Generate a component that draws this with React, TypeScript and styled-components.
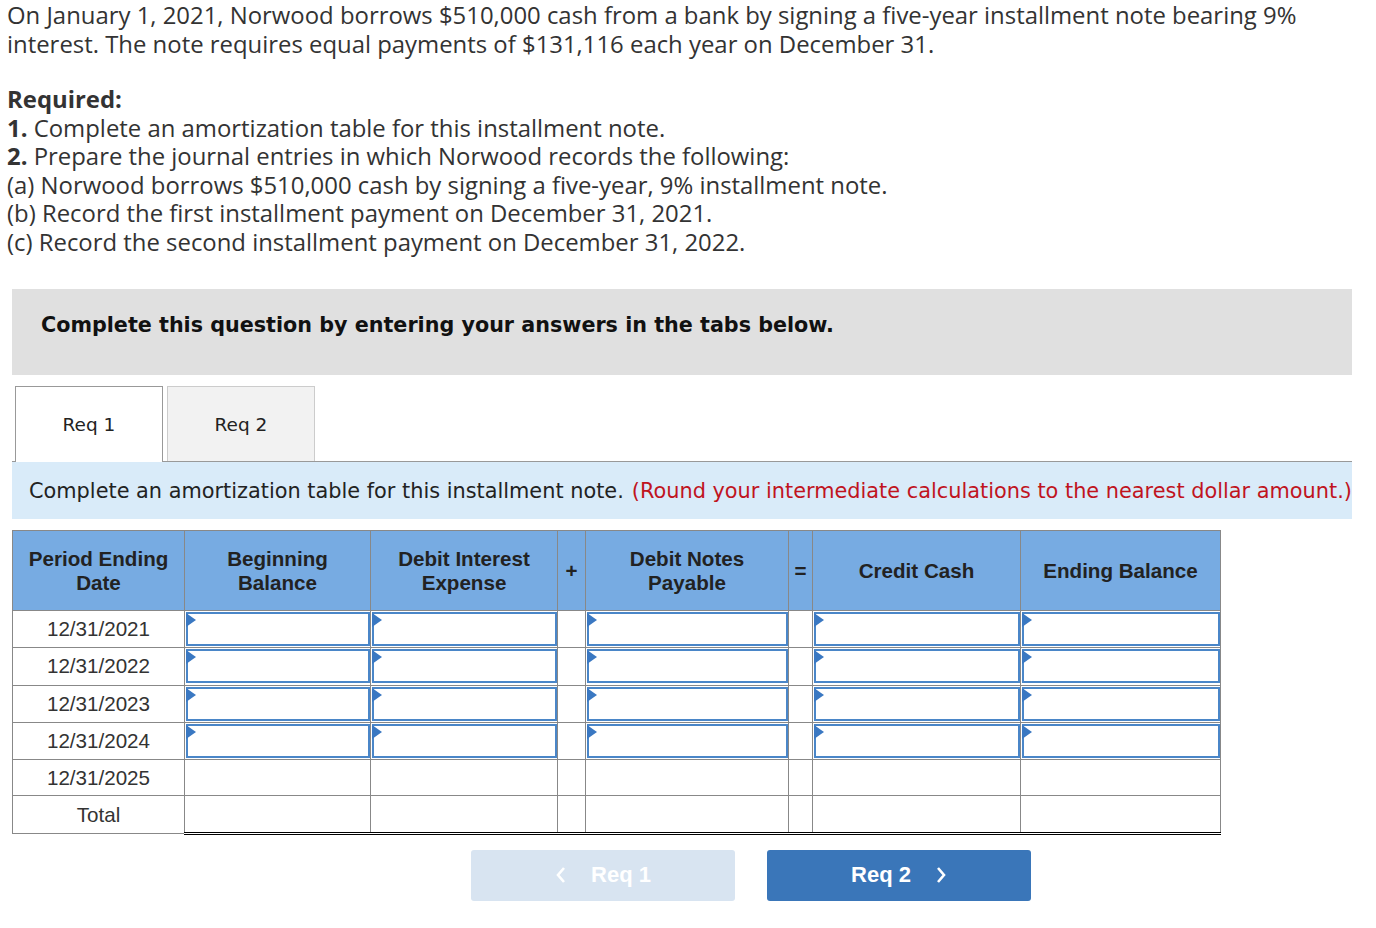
import React from 'react';
import styled, { createGlobalStyle } from 'styled-components';

const GlobalStyle = createGlobalStyle`
    body {
        margin: 0;
        background: #fff;
        color: #222;
    }
`;

const Page = styled.div`
    padding: 1px 0 40px 7px;
    width: 1376px;
    box-sizing: border-box;
`;

const Problem = styled.div`
    font-family: 'Open Sans', Lato, sans-serif;
    font-size: 23.9px;
    line-height: 28.5px;
    color: #333;
    white-space: nowrap;

    b {
        font-weight: 700;
    }
`;

const Para = styled.p`
    margin: 0;
`;

const Gap = styled.div`
    height: 27px;
`;

const Section = styled.div`
    margin: 33px 0 0 5px;
    width: 1340px;
`;

const Banner = styled.div`
    background: #e0e0e0;
    padding: 24px 29px 38px;
    font-family: 'DejaVu Sans', Verdana, sans-serif;
    font-weight: bold;
    font-size: 20.7px;
    line-height: 24px;
    color: #111;
`;

const Tabs = styled.div`
    display: flex;
    gap: 4px;
    padding-left: 3px;
    margin-top: 11px;
    border-bottom: 1px solid #999;
`;

const Tab = styled.div<{ $active?: boolean }>`
    width: 148px;
    box-sizing: border-box;
    display: flex;
    align-items: center;
    justify-content: center;
    font-family: 'DejaVu Sans', Verdana, sans-serif;
    font-size: 18.5px;
    color: #222;
    background: ${p => (p.$active ? '#fff' : '#f2f2f2')};
    border: 1px solid ${p => (p.$active ? '#999' : '#ccc')};
    border-bottom: none;
    margin-bottom: ${p => (p.$active ? '-1px' : '0')};
    height: ${p => (p.$active ? '76px' : '75px')};
`;

const Instruction = styled.div`
    background: #d9ebf9;
    height: 57px;
    display: flex;
    align-items: center;
    padding-left: 17px;
    font-family: 'DejaVu Sans', Verdana, sans-serif;
    font-size: 20.85px;
    color: #222;
    white-space: nowrap;
    overflow: hidden;
`;

const Note = styled.span`
    color: #c0141e;
    margin-left: 8px;
`;

const Table = styled.table`
    margin-top: 11px;
    border-collapse: collapse;
    font-family: 'Liberation Sans', Arial, sans-serif;
    table-layout: fixed;
`;

const Th = styled.th<{ $w: number }>`
    width: ${p => p.$w}px;
    height: 79px;
    background: #77abe2;
    border: 1px solid #888;
    font-size: 20.6px;
    line-height: 24px;
    font-weight: bold;
    color: #222;
    padding: 0;
    text-align: center;
`;

const Td = styled.td<{ $top?: boolean; $bottom?: boolean }>`
    height: 35.3px;
    border-left: 1px solid #888;
    border-right: 1px solid #888;
    border-top: 1px solid ${p => (p.$top ? '#000' : '#888')};
    border-bottom: ${p => (p.$bottom ? '3px double #000' : '1px solid #888')};
    padding: 0;
    font-size: 20.6px;
    line-height: 22px;
    color: #333;
    text-align: center;
    vertical-align: middle;
`;

const DateTd = styled(Td)`
    border-bottom: 1px solid #888;
    border-top: 1px solid #888;
`;

const InputCell = styled(Td)`
    padding: 1px 0 0 1px;
    vertical-align: top;
`;

const InputBox = styled.div`
    position: relative;
    height: 34px;
    border: 2px solid #4a86c8;
    background: #fff;
    box-sizing: border-box;
`;

const Flag = styled.span`
    position: absolute;
    left: -2px;
    top: -1px;
    width: 0;
    height: 0;
    border-top: 7px solid transparent;
    border-bottom: 7px solid transparent;
    border-left: 10px solid #3a78c2;
`;

const Buttons = styled.div`
    display: flex;
    gap: 32px;
    margin: 15px 0 0 459px;
`;

const NavButton = styled.div<{ $disabled?: boolean }>`
    width: 264px;
    height: 51px;
    border-radius: 3px;
    background: ${p => (p.$disabled ? '#d8e4f1' : '#3a76b9')};
    color: #fff;
    display: flex;
    align-items: center;
    justify-content: center;
    gap: 24px;
    font-family: 'Liberation Sans', Arial, sans-serif;
    font-weight: bold;
    font-size: 22px;
`;

const Chevron = ({ dir }: { dir: 'left' | 'right' }) => (
    <svg width="12" height="18" viewBox="0 0 12 18">
        <path
            d={dir === 'left' ? 'M9 2 L3 9 L9 16' : 'M3 2 L9 9 L3 16'}
            fill="none"
            stroke="#fff"
            strokeWidth="2.6"
        />
    </svg>
);

const cols = [
    { w: 171, label: <>Period Ending<br />Date</> },
    { w: 185, label: <>Beginning<br />Balance</> },
    { w: 186, label: <>Debit Interest<br />Expense</> },
    { w: 27, label: '+' },
    { w: 202, label: <>Debit Notes<br />Payable</> },
    { w: 23, label: '=' },
    { w: 207, label: 'Credit Cash' },
    { w: 199, label: 'Ending Balance' },
];

const dates = ['12/31/2021', '12/31/2022', '12/31/2023', '12/31/2024', '12/31/2025', 'Total'];

const App = () => {
    return (
        <Page>
            <GlobalStyle />
            <Problem>
                <Para>
                    On January 1, 2021, Norwood borrows $510,000 cash from a bank by signing a five-year installment note bearing 9%
                    <br />
                    interest. The note requires equal payments of $131,116 each year on December 31.
                </Para>
                <Gap />
                <Para><b>Required:</b></Para>
                <Para><b>1.</b> Complete an amortization table for this installment note.</Para>
                <Para><b>2.</b> Prepare the journal entries in which Norwood records the following:</Para>
                <Para>(a) Norwood borrows $510,000 cash by signing a five-year, 9% installment note.</Para>
                <Para>(b) Record the first installment payment on December 31, 2021.</Para>
                <Para>(c) Record the second installment payment on December 31, 2022.</Para>
            </Problem>
            <Section>
                <Banner>Complete this question by entering your answers in the tabs below.</Banner>
                <Tabs>
                    <Tab $active>Req 1</Tab>
                    <Tab>Req 2</Tab>
                </Tabs>
                <Instruction>
                    Complete an amortization table for this installment note.
                    <Note>(Round your intermediate calculations to the nearest dollar amount.)</Note>
                </Instruction>
                <Table>
                    <thead>
                        <tr>
                            {cols.map((c, i) => (
                                <Th key={i} $w={c.w}>{c.label}</Th>
                            ))}
                        </tr>
                    </thead>
                    <tbody>
                        {dates.map((d, r) => {
                            const editable = r < 4;
                            const isTotal = r === 5;
                            return (
                                <tr key={d}>
                                    <DateTd>{d}</DateTd>
                                    {cols.slice(1).map((c, i) => {
                                        const sign = i === 2 || i === 4;
                                        if (editable && !sign) {
                                            return (
                                                <InputCell key={i}>
                                                    <InputBox>
                                                        <Flag />
                                                    </InputBox>
                                                </InputCell>
                                            );
                                        }
                                        return <Td key={i} $top={isTotal} $bottom={isTotal} />;
                                    })}
                                </tr>
                            );
                        })}
                    </tbody>
                </Table>
                <Buttons>
                    <NavButton $disabled>
                        <Chevron dir="left" />
                        Req 1
                    </NavButton>
                    <NavButton>
                        Req 2
                        <Chevron dir="right" />
                    </NavButton>
                </Buttons>
            </Section>
        </Page>
    );
};

export default App;
